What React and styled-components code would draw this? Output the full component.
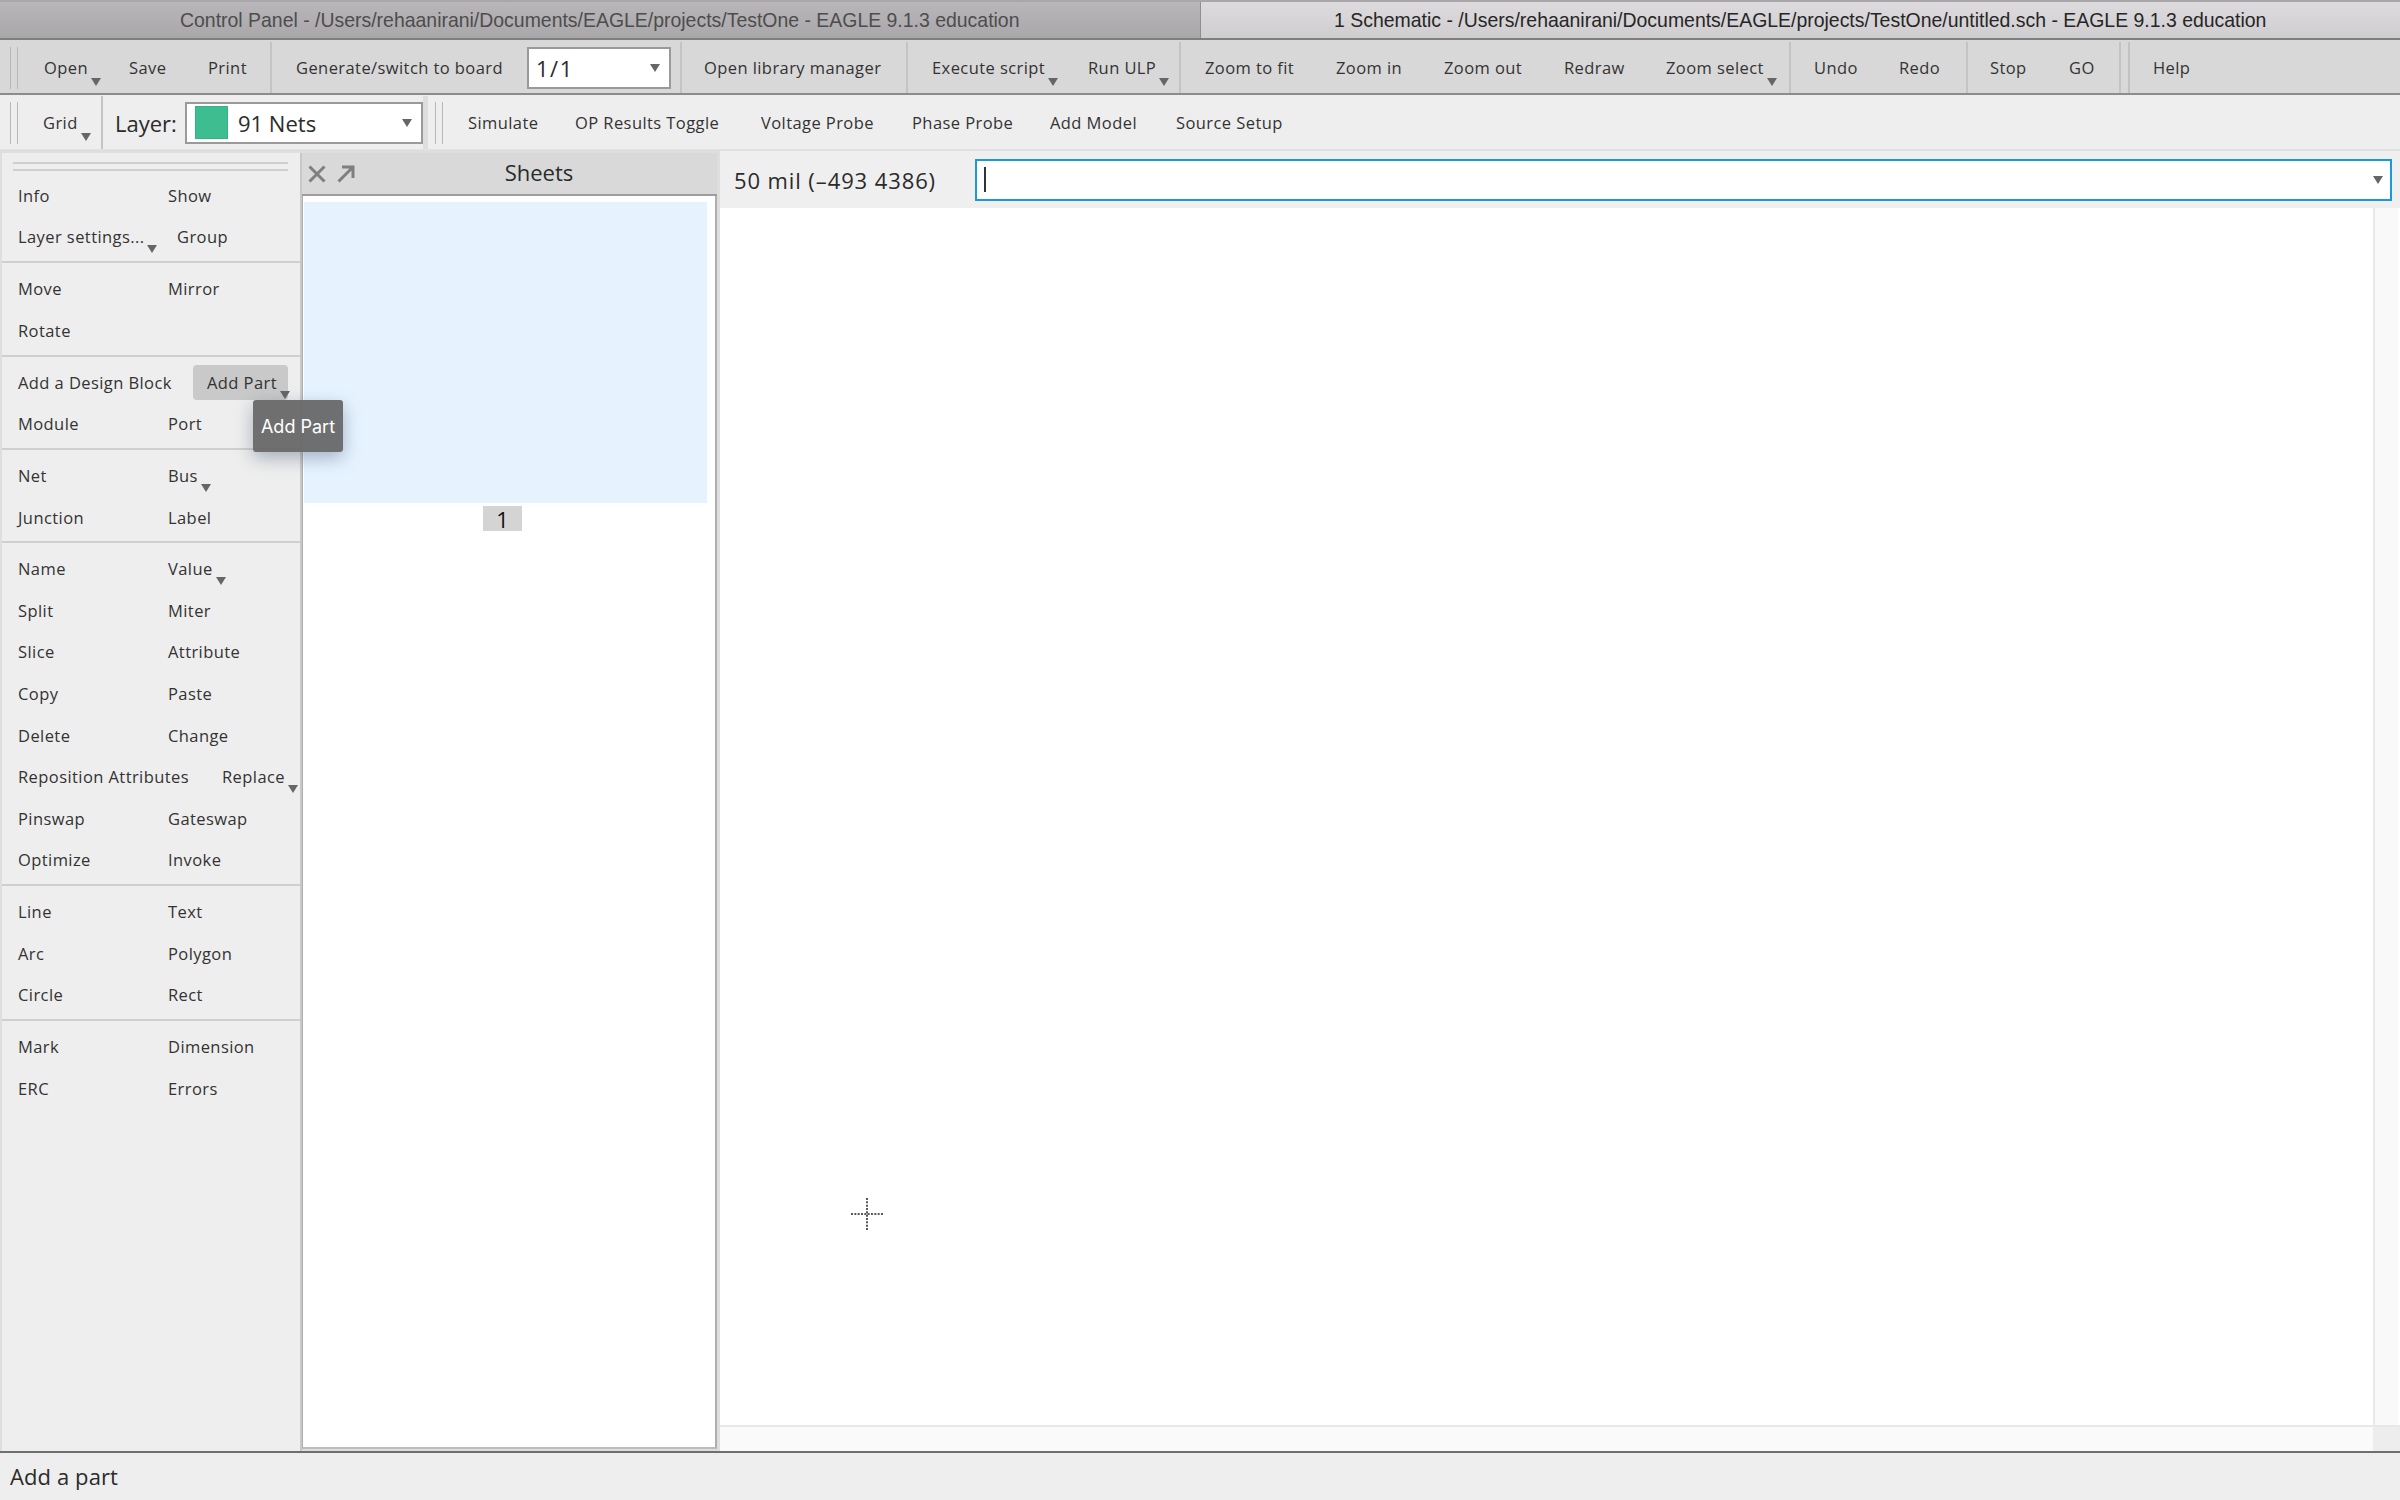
import styled, { createGlobalStyle } from 'styled-components'

const GlobalStyle = createGlobalStyle`
    html, body {
        margin: 0;
        height: 100%;
        overflow: hidden;
    }

    #root {
        height: 100%;
    }

    * {
        box-sizing: border-box;
    }
`

const topTools = [
    { pad: 26, items: [['Open', 85, true], ['Save', 79], ['Print', 62]] },
    { pad: 24, items: [['Generate/switch to board', 231]], combo: '1/1' },
    { pad: 22, items: [['Open library manager', 202]] },
    { pad: 24, items: [['Execute script', 156, true], ['Run ULP', 91, true]] },
    { pad: 24, items: [['Zoom to fit', 131], ['Zoom in', 108], ['Zoom out', 120], ['Redraw', 102], ['Zoom select', 123, true]] },
    { pad: 23, items: [['Undo', 85], ['Redo', 67]] },
    { pad: 22, items: [['Stop', 79], ['GO', 50]] },
]

const simTools = [['Simulate', 107], ['OP Results Toggle', 186], ['Voltage Probe', 151], ['Phase Probe', 138], ['Add Model', 126], ['Source Setup', 160]]

const sections = [
    [[['Info'], ['Show']], [['Layer settings...', 159, true], ['Group']]],
    [[['Move'], ['Mirror']], [['Rotate']]],
    [[['Add a Design Block', 175], ['Add Part', 95, true, true]], [['Module'], ['Port']]],
    [[['Net'], ['Bus', 130, true]], [['Junction'], ['Label']]],
    [
        [['Name'], ['Value', 130, true]],
        [['Split'], ['Miter']],
        [['Slice'], ['Attribute']],
        [['Copy'], ['Paste']],
        [['Delete'], ['Change']],
        [['Reposition Attributes', 204], ['Replace', 76, true]],
        [['Pinswap'], ['Gateswap']],
        [['Optimize'], ['Invoke']],
    ],
    [[['Line'], ['Text']], [['Arc'], ['Polygon']], [['Circle'], ['Rect']]],
    [[['Mark'], ['Dimension']], [['ERC'], ['Errors']]],
]

const Tool = ({ label, w, menu, active }) => (
    <ToolButton $w={w} $active={active}>
        <ToolLabel>
            {label}
            {menu && <MenuCaret />}
        </ToolLabel>
        {active && <Tooltip>{label}</Tooltip>}
    </ToolButton>
)

export default function App() {
    return (
        <Window>
            <GlobalStyle />
            <TitleBar>
                <TitleTab>Control Panel - /Users/rehaanirani/Documents/EAGLE/projects/TestOne - EAGLE 9.1.3 education</TitleTab>
                <TitleTab $current>1 Schematic - /Users/rehaanirani/Documents/EAGLE/projects/TestOne/untitled.sch - EAGLE 9.1.3 education</TitleTab>
            </TitleBar>

            <TopToolbar>
                <Grip />
                {topTools.map((group, i) => (
                    <ToolGroup key={i} $pad={group.pad}>
                        {group.items.map(([label, w, menu]) => <Tool key={label} label={label} w={w} menu={menu} />)}
                        {group.combo && (
                            <ComboBox $w={144}>
                                <ComboText $spaced>{group.combo}</ComboText>
                                <ComboArrow />
                            </ComboBox>
                        )}
                    </ToolGroup>
                ))}
                <Divider $left={7} />
                <ToolGroup $pad={23} $flat>
                    <Tool label="Help" w={60} />
                </ToolGroup>
            </TopToolbar>

            <SecondToolbar>
                <Grip />
                <ToolGroup $pad={25}>
                    <Tool label="Grid" w={58} menu />
                </ToolGroup>
                <LayerLabel>Layer:</LayerLabel>
                <ComboBox $w={238}>
                    <Swatch />
                    <ComboText>91 Nets</ComboText>
                    <ComboArrow />
                </ComboBox>
                <ToolbarBreak />
                <Grip />
                <ToolGroup $pad={25} $flat>
                    {simTools.map(([label, w]) => <Tool key={label} label={label} w={w} />)}
                </ToolGroup>
            </SecondToolbar>

            <Main>
                <SidePanel>
                    <SideHandle />
                    {sections.map((rows, i) => (
                        <SideSection key={i}>
                            {rows.map((row, j) => (
                                <SideRow key={j}>
                                    {row.map(([label, w = 150, menu, active]) => (
                                        <Tool key={label} label={label} w={w} menu={menu} active={active} />
                                    ))}
                                </SideRow>
                            ))}
                        </SideSection>
                    ))}
                </SidePanel>

                <SheetsPanel>
                    <SheetsHeader>
                        <HeaderIcon viewBox="0 0 18 18">
                            <path d="M1.5 1.5 L16.5 16.5 M16.5 1.5 L1.5 16.5" />
                        </HeaderIcon>
                        <HeaderIcon viewBox="0 0 18 18">
                            <path d="M1.5 16.5 L16 2 M5 2 L16 2 L16 13" />
                        </HeaderIcon>
                        <SheetsTitle>Sheets</SheetsTitle>
                    </SheetsHeader>
                    <SheetsBody>
                        <SheetPreview />
                        <SheetNumber>1</SheetNumber>
                    </SheetsBody>
                </SheetsPanel>

                <EditorColumn>
                    <CommandBar>
                        <Coordinates>50 mil (–493 4386)</Coordinates>
                        <CommandInput>
                            <TextCursor />
                            <ComboArrow />
                        </CommandInput>
                    </CommandBar>
                    <CanvasRow>
                        <Canvas>
                            <Crosshair viewBox="0 0 32 32">
                                <path d="M0 16 H32 M16 0 V32" />
                            </Crosshair>
                        </Canvas>
                        <VerticalScroll />
                    </CanvasRow>
                    <ScrollRow>
                        <HorizontalScroll />
                        <ScrollCorner />
                    </ScrollRow>
                </EditorColumn>
            </Main>

            <StatusBar>Add a part</StatusBar>
        </Window>
    )
}

const Window = styled.div`
    width: 100%;
    height: 100%;
    display: flex;
    flex-direction: column;
    background-color: #eeeeee;
    color: #333333;
    font-family: "Open Sans", "DejaVu Sans", sans-serif;
    font-size: 16.5px;
    letter-spacing: 0.42px;
`

const TitleBar = styled.header`
    height: 40px;
    flex: none;
    display: flex;
    letter-spacing: 0;
    border-top: 2px solid #a9a7a9;
    border-bottom: 2px solid #7f7f7f;
`

const TitleTab = styled.div`
    flex: 1;
    display: flex;
    align-items: center;
    justify-content: center;
    font-family: "Liberation Sans", Arial, sans-serif;
    font-size: 19.45px;
    color: ${p => p.$current ? '#262626' : '#4d4d4d'};
    background: ${p => p.$current
        ? 'linear-gradient(#dddbdd, #cfcdcf)'
        : 'linear-gradient(#b8b6b8, #a9a7a9)'};
    border-right: ${p => p.$current ? 'none' : '1px solid #8f8f8f'};
`

const TopToolbar = styled.nav`
    height: 55px;
    flex: none;
    display: flex;
    background-color: #d8d8d8;
    border-bottom: 2px solid #8c8c8c;
    padding-top: 2px;
`

const SecondToolbar = styled.nav`
    height: 55px;
    flex: none;
    display: flex;
    align-items: center;
    padding-top: 1px;
    background-color: #eeeeee;
    border-bottom: 1px solid #e2e2e2;
`

const Grip = styled.div`
    flex: none;
    width: 8px;
    height: 42px;
    margin-left: 10px;
    align-self: center;
    border-left: 1px solid #b8b8b8;
    border-right: 1px solid #b8b8b8;
`

const Divider = styled.div`
    flex: none;
    width: 2px;
    margin-left: ${p => p.$left || 0}px;
    background-color: #c2c2c2;
`

const ToolGroup = styled.div`
    display: flex;
    align-items: center;
    flex: none;
    padding-left: ${p => p.$pad}px;
    align-self: stretch;
    border-right: ${p => p.$flat ? 'none' : '2px solid #c4c4c4'};
`

const ToolButton = styled.div`
    position: relative;
    flex: none;
    display: flex;
    align-items: center;
    width: ${p => p.$w}px;
    height: ${p => p.$active ? '35px' : 'auto'};
    padding-left: ${p => p.$active ? '14px' : '0'};
    background-color: ${p => p.$active ? '#c9c9c9' : 'transparent'};
    border-radius: 4px;
    white-space: nowrap;
`

const ToolLabel = styled.span`
    position: relative;
    line-height: 22px;
`

const MenuCaret = styled.i`
    position: absolute;
    left: calc(100% + 3px);
    top: 21px;
    border-left: 5px solid transparent;
    border-right: 5px solid transparent;
    border-top: 8px solid #666666;
`

const Tooltip = styled.div`
    position: absolute;
    z-index: 5;
    top: 35px;
    left: 60px;
    width: 90px;
    height: 52px;
    display: flex;
    align-items: center;
    justify-content: center;
    font-family: Inter, "Liberation Sans", sans-serif;
    font-size: 18px;
    letter-spacing: 0;
    color: #ffffff;
    background-color: rgba(105, 105, 106, 0.96);
    border-radius: 3px;
    box-shadow: 0 6px 18px rgba(60, 80, 110, 0.4);
`

const ComboBox = styled.div`
    flex: none;
    width: ${p => p.$w}px;
    height: 42px;
    display: flex;
    align-items: center;
    padding: 0 9px 0 8px;
    background-color: #ffffff;
    border: 2px solid #9a9a9a;
    margin-right: 9px;
`

const ComboText = styled.span`
    font-size: 22px;
    letter-spacing: ${p => p.$spaced ? '1.5px' : '0'};
    margin-left: ${p => p.$spaced ? '-1px' : '0'};
    color: #2b2b2b;
`

const ComboArrow = styled.i`
    margin-left: auto;
    border-left: 5px solid transparent;
    border-right: 5px solid transparent;
    border-top: 8px solid #666666;
`

const Swatch = styled.span`
    width: 33px;
    height: 33px;
    margin-right: 10px;
    background-color: #3dbd90;
    border: 1px solid #31b587;
`

const LayerLabel = styled.span`
    flex: none;
    width: 70px;
    margin-left: 12px;
    font-size: 22px;
    letter-spacing: 0;
    color: #2b2b2b;
`

const ToolbarBreak = styled.div`
    flex: none;
    width: 5px;
    align-self: stretch;
    margin-left: -9px;
    margin-right: -3px;
    background-color: #dedede;
`

const Main = styled.main`
    flex: 1;
    min-height: 0;
    display: flex;
    padding-left: 2px;
    background-color: #dedede;
`

const SidePanel = styled.aside`
    flex: none;
    width: 300px;
    margin-top: 3px;
    padding-top: 9px;
    background-color: #eeeeee;
    border-right: 2px solid #c8c8c8;
`

const SideHandle = styled.div`
    height: 9px;
    margin: 0 12px 4px 11px;
    border-top: 2px solid #cfcfcf;
    border-bottom: 2px solid #cfcfcf;
`

const SideSection = styled.section`
    padding: 5.2px 0 3px;
    border-bottom: 2px solid #cfcfcf;

    &:first-of-type {
        padding-top: 0;
    }

    &:last-child {
        border-bottom: none;
    }
`

const SideRow = styled.div`
    height: 41.6px;
    display: flex;
    align-items: center;
    padding-left: 16px;

    ${MenuCaret} {
        top: 19px;
    }
`

const SheetsPanel = styled.section`
    flex: none;
    width: 415px;
    margin: 3px 0 2px;
    display: flex;
    flex-direction: column;
`

const SheetsHeader = styled.div`
    flex: none;
    height: 43px;
    display: flex;
    align-items: center;
    gap: 11px;
    padding-left: 6px;
    background-color: #d9d9d9;
    border-bottom: 2px solid #9e9e9e;
`

const HeaderIcon = styled.svg`
    width: 18px;
    height: 18px;
    flex: none;

    path {
        fill: none;
        stroke: #7f7f7f;
        stroke-width: 3;
    }
`

const SheetsTitle = styled.h2`
    flex: 1;
    margin: 0 5px 3px 0;
    text-align: center;
    font-size: 22px;
    font-weight: 400;
    letter-spacing: 0;
    color: #2b2b2b;
`

const SheetsBody = styled.div`
    flex: 1;
    padding: 6px 0 0 1px;
    display: flex;
    flex-direction: column;
    background-color: #ffffff;
    border-left: 1px solid #aeaeae;
    border-right: 2px solid #aeaeae;
    border-bottom: 2px solid #bcbcbc;
`

const SheetPreview = styled.div`
    width: 403px;
    height: 301px;
    background-color: #e6f3ff;
`

const SheetNumber = styled.span`
    width: 39px;
    height: 25px;
    margin: 3px 0 0 179px;
    display: flex;
    align-items: center;
    justify-content: center;
    font-size: 22px;
    letter-spacing: 0;
    color: #111111;
    background-color: #d4d4d4;
`

const EditorColumn = styled.section`
    flex: 1;
    min-width: 0;
    margin: 1px 0 0 3px;
    display: flex;
    flex-direction: column;
`

const CommandBar = styled.div`
    flex: none;
    height: 57px;
    display: flex;
    align-items: center;
    padding: 0 8px 0 14px;
    background-color: #efefef;
`

const Coordinates = styled.span`
    flex: none;
    width: 241px;
    font-size: 22px;
    letter-spacing: 0.9px;
    color: #2b2b2b;
    white-space: nowrap;
`

const CommandInput = styled.div`
    flex: 1;
    height: 42px;
    display: flex;
    align-items: center;
    padding: 0 7px 0 7px;
    background-color: #ffffff;
    border: 2px solid #1a9ad6;
`

const TextCursor = styled.span`
    width: 2px;
    height: 25px;
    background-color: #333333;
`

const CanvasRow = styled.div`
    flex: 1;
    min-height: 0;
    display: flex;
`

const Canvas = styled.div`
    flex: 1;
    position: relative;
    background-color: #ffffff;
`

const Crosshair = styled.svg`
    position: absolute;
    left: 131px;
    top: 990px;
    width: 32px;
    height: 32px;

    path {
        fill: none;
        stroke: #222222;
        stroke-width: 1.5;
        stroke-dasharray: 2 1.33;
    }
`

const VerticalScroll = styled.div`
    flex: none;
    width: 27px;
    background-color: #f9f9f9;
    border-left: 2px solid #e8e8e8;
    border-right: 2px solid #ffffff;
`

const ScrollRow = styled.div`
    flex: none;
    height: 26px;
    display: flex;
    border-top: 2px solid #e8e8e8;
`

const HorizontalScroll = styled.div`
    flex: 1;
    background-color: #fafafa;
`

const ScrollCorner = styled.div`
    flex: none;
    width: 27px;
    background-color: #ededed;
`

const StatusBar = styled.footer`
    flex: none;
    height: 49px;
    display: flex;
    align-items: center;
    padding: 0 0 2px 10px;
    font-size: 22px;
    letter-spacing: 0.1px;
    color: #2b2b2b;
    background-color: #eeeeee;
    border-top: 2px solid #6f6f6f;
`
